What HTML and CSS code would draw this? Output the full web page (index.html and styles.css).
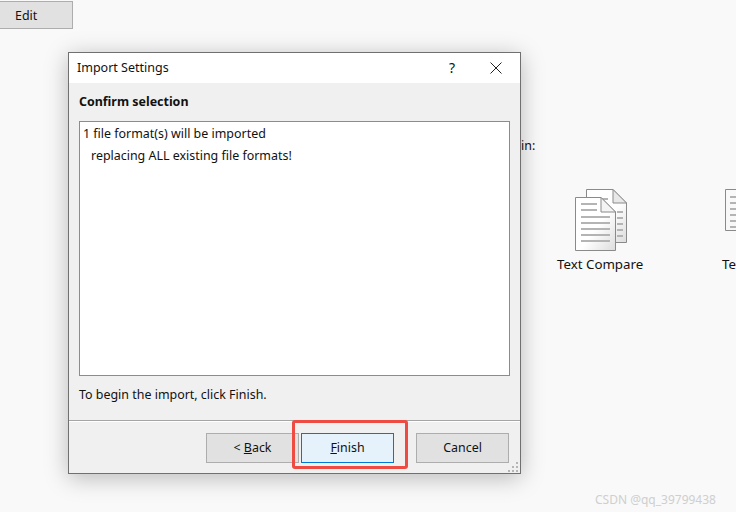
FILE: index.html
```html
<!DOCTYPE html>
<html lang="en">
<head>
<meta charset="utf-8">
<title>Import Settings</title>
<link rel="stylesheet" href="styles.css">
</head>
<body>
<div class="desktop">
  <div class="edit-btn">Edit</div>
  <div class="behind-label">in:</div>

  <div class="file-icon icon-compare">
    <svg width="54" height="64" viewBox="0 0 54 64">
      <defs>
        <linearGradient id="pg" x1="0" y1="0" x2="1" y2="1">
          <stop offset="0.55" stop-color="#ffffff"/>
          <stop offset="1" stop-color="#dcdcdc"/>
        </linearGradient>
      </defs>
      <path d="M12.5 .5H39L52.5 14V53.500H12.500Z" fill="url(#pg)" stroke="#8a8a8a"/>
      <path d="M39 .5V14H52.500Z" fill="#e8e8e8" stroke="#8a8a8a"/>
      <path d="M22 10h12M43 23h6M43 29h6M43 35h6M43 41h6M43 47h6" stroke="#b4b4b4" stroke-width="2"/>
      <path d="M1.500 8.500H27L41.500 23V61.500H1.500Z" fill="url(#pg)" stroke="#8a8a8a"/>
      <path d="M27 8.500V23H41.500Z" fill="#f4f4f4" stroke="#8a8a8a"/>
      <path d="M7 15h16M7 21h16M7 28h29M7 34h29M7 40h29M7 46h29M7 52h29" stroke="#b4b4b4" stroke-width="2"/>
    </svg>
    <span class="file-label">Text Compare</span>
  </div>

  <div class="file-icon icon-second">
    <svg width="14" height="44" viewBox="0 0 14 44">
      <path d="M.5 .5H14M.5 .5V41.500H14" fill="#f8f8f8" stroke="#8a8a8a"/>
      <path d="M5 8h9M5 14h9M5 20h9M5 26h9M5 32h9M5 38h9" stroke="#b4b4b4" stroke-width="2"/>
    </svg>
    <span class="file-label">Te</span>
  </div>

  <div class="dialog">
    <div class="titlebar">
      <span class="title">Import Settings</span>
      <span class="help">?</span>
      <svg class="close" width="12" height="12" viewBox="0 0 12 12">
        <path d="M.5 .5L11.500 11.500M11.500 .5L.5 11.500" stroke="#222" stroke-width="1" fill="none"/>
      </svg>
    </div>
    <div class="content">
      <div class="heading">Confirm selection</div>
      <div class="textbox">
        <div>1 file format(s) will be imported</div>
        <div class="indent">replacing ALL existing file formats!</div>
      </div>
      <div class="hint">To begin the import, click Finish.</div>
    </div>
    <div class="footer">
      <div class="btn btn-back">&lt; <u>B</u>ack</div>
      <div class="btn btn-finish"><u>F</u>inish</div>
      <div class="btn btn-cancel">Cancel</div>
      <svg class="grip" width="11" height="11" viewBox="0 0 11 11">
        <path d="M8 0h2v2H8zM4 4h2v2H4zM8 4h2v2H8zM0 8h2v2H0zM4 8h2v2H4zM8 8h2v2H8z" fill="#b5b5b5"/>
      </svg>
    </div>
  </div>

  <div class="highlight"></div>
  <div class="watermark">CSDN @qq_39799438</div>
</div>
</body>
</html>
```
FILE: styles.css
```css
* { box-sizing: border-box; }
html, body { margin: 0; padding: 0; }
body { background: #f9f9f9; }

.desktop {
  position: relative;
  width: 736px;
  height: 512px;
  overflow: hidden;
  background: #f9f9f9;
  font-family: "Noto Sans", "Open Sans", sans-serif;
  font-size: 12.45px;
  color: #111;
}

.edit-btn {
  position: absolute;
  left: -2px;
  top: 1px;
  width: 75px;
  height: 28px;
  padding-left: 16px;
  line-height: 27px;
  background: #e1e1e1;
  border: 1px solid #adadad;
}

.behind-label {
  position: absolute;
  left: 521px;
  top: 137px;
  line-height: 18px;
}

.file-icon { position: absolute; }
.file-icon svg { display: block; }
.icon-compare { left: 574px; top: 189px; width: 54px; height: 64px; }
.icon-second { left: 725px; top: 189px; width: 14px; height: 44px; }

.file-label {
  position: absolute;
  top: 66px;
  white-space: nowrap;
  font-size: 13.3px;
  line-height: 19px;
}
.icon-compare .file-label { left: -17px; }
.icon-second .file-label { left: -3px; }

.dialog {
  position: absolute;
  left: 68px;
  top: 52px;
  width: 453px;
  height: 422px;
  display: flex;
  flex-direction: column;
  background: #f0f0f0;
  border: 1px solid #707070;
  box-shadow: 0 4px 22px rgba(0, 0, 0, 0.26);
}

.titlebar {
  display: flex;
  align-items: center;
  height: 30px;
  flex: none;
  padding: 0 18px 0 8px;
  background: #fff;
}
.title { flex: 1; position: relative; top: -1px; font-size: 12.5px; }
.help { margin-right: 35px; font-size: 14px; position: relative; top: -1px; }
.close { display: block; }

.content {
  flex: 1;
  display: flex;
  flex-direction: column;
  padding: 10px 10px 0;
}
.heading { font-weight: 700; line-height: 18px; height: 28px; }
.textbox {
  height: 255px;
  padding: 1px 3px;
  line-height: 21.500px;
  background: #fff;
  border: 1px solid #8c8c8c;
}
.indent { padding-left: 8px; }
.hint { margin-top: 10px; line-height: 18px; }

.footer {
  position: relative;
  display: flex;
  flex: none;
  height: 53px;
  padding: 12px 11px 0 137px;
  border-top: 1px solid #a5a5a5;
  box-shadow: inset 0 1px 0 #fff;
}
.btn {
  width: 93px;
  height: 30px;
  line-height: 27px;
  text-align: center;
  background: #e1e1e1;
  border: 1px solid #adadad;
}
.btn-back { margin-right: 2px; }
.btn-finish { margin-right: 22px; background: #e5f1fb; border-color: #0078d7; }
.grip { position: absolute; right: 1px; bottom: 0; }

.highlight {
  position: absolute;
  left: 292px;
  top: 420px;
  width: 116px;
  height: 48.5px;
  border: 3px solid #ee4b43;
  border-radius: 3px;
}

.watermark {
  position: absolute;
  left: 595px;
  top: 491px;
  font-size: 12px;
  line-height: 17px;
  color: #cfcfcf;
  white-space: nowrap;
}
```
